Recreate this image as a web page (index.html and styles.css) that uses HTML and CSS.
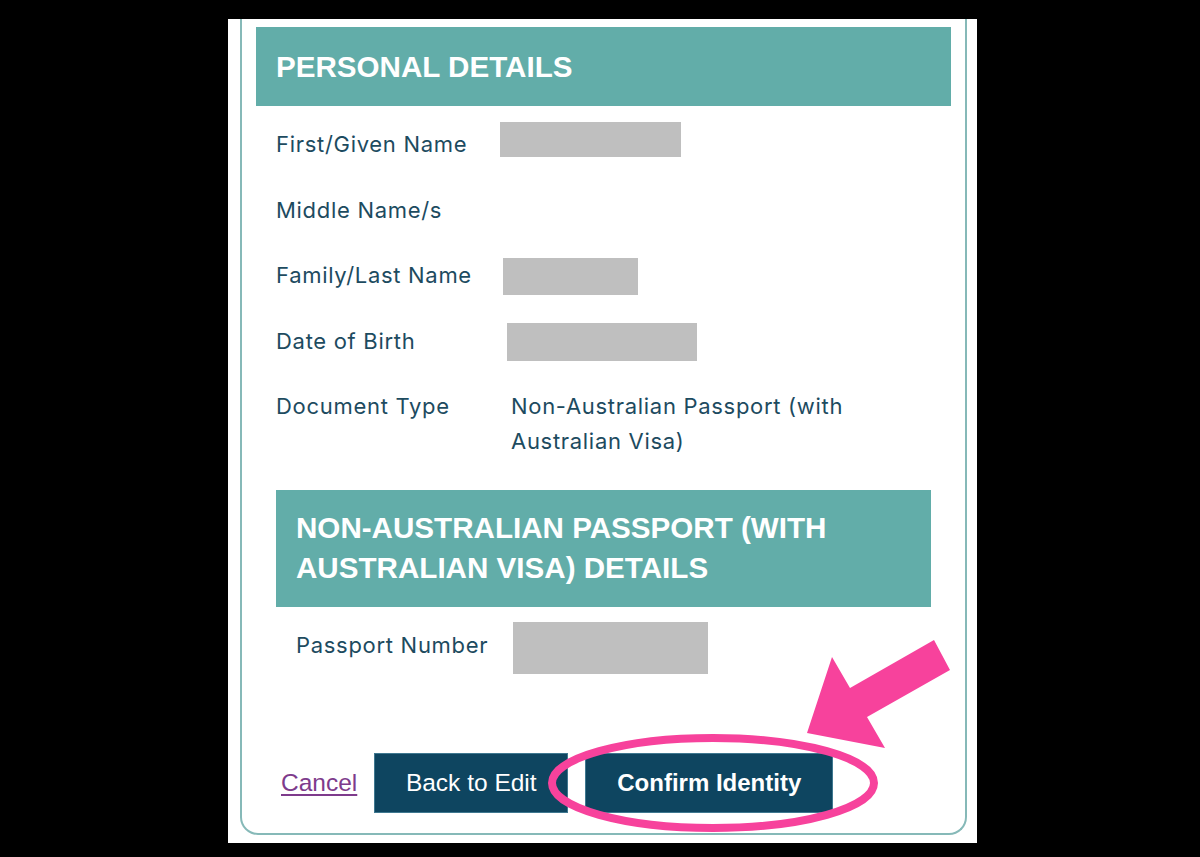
FILE: index.html
```html
<!DOCTYPE html>
<html lang="en">

<head>
    <meta charset="UTF-8">
    <meta name="viewport" content="width=device-width, initial-scale=1.0">
    <title>Confirm Identity</title>
    <link rel="stylesheet" href="styles.css">
</head>

<body>
    <div class="page">
        <div class="card">
            <h2 class="section-head">PERSONAL DETAILS</h2>
            <ul class="details">
                <li class="row">
                    <span class="label">First/Given Name</span>
                    <span class="redact redact-first"></span>
                </li>
                <li class="row">
                    <span class="label">Middle Name/s</span>
                </li>
                <li class="row">
                    <span class="label">Family/Last Name</span>
                    <span class="redact redact-last"></span>
                </li>
                <li class="row">
                    <span class="label">Date of Birth</span>
                    <span class="redact redact-dob"></span>
                </li>
                <li class="row row-multi">
                    <span class="label">Document Type</span>
                    <span class="value">Non-Australian Passport (with<br>Australian Visa)</span>
                </li>
            </ul>

            <div class="sub-section">
                <h2 class="section-head sub-head">NON-AUSTRALIAN PASSPORT (WITH AUSTRALIAN VISA) DETAILS</h2>
                <ul class="details">
                    <li class="row">
                        <span class="label">Passport Number</span>
                        <span class="redact redact-passport"></span>
                    </li>
                </ul>
            </div>

            <div class="actions">
                <a href="#" class="cancel">Cancel</a>
                <button class="btn">Back to Edit</button>
                <button class="btn btn-primary">Confirm Identity</button>
            </div>
        </div>
    </div>

    <!-- annotation drawn over the screenshot -->
    <svg class="annotation" width="1200" height="857" viewBox="0 0 1200 857">
        <ellipse cx="713" cy="783" rx="161" ry="45" fill="none" stroke="#f7429c" stroke-width="8" />
        <polygon points="807,733 832,657 850,688 934,640 950,670 867,717 885,748" fill="#f7429c" />
    </svg>
</body>

</html>
```

FILE: styles.css
```css
body {
    margin: 0;
    background-color: #000;
    font-family: "Liberation Sans", Arial, sans-serif;
}

.page {
    width: 749px;
    height: 824px;
    margin: 19px 0 0 228px;
    background-color: #fff;
    padding-left: 12px;
    box-sizing: border-box;
}

.card {
    width: 727px;
    height: 816px;
    box-sizing: border-box;
    border: 2px solid #86b9b8;
    border-top: none;
    border-radius: 0 0 18px 18px;
    padding: 8px 14px 0 14px;
}

.section-head {
    margin: 0;
    background-color: #62ada9;
    color: #fff;
    font-size: 29.6px;
    font-weight: bold;
    height: 79px;
    line-height: 79px;
    padding-left: 20px;
}

.details {
    list-style: none;
    margin: 0;
    padding: 0;
}

.card > .details {
    margin-top: 6px;
}

.row {
    display: flex;
    align-items: center;
    height: 65.5px;
    padding-left: 20px;
    font-family: Inter, "Noto Sans", sans-serif;
    font-size: 22px;
    line-height: 35px;
    color: #1d4b5f;
    letter-spacing: 0.7px;
}

.row-multi {
    height: auto;
    align-items: flex-start;
    padding: 15px 0 15px 20px;
}

.label {
    width: 235px;
    flex-shrink: 0;
}

.redact {
    display: block;
    background-color: #bfbfbf;
}

.redact-first {
    width: 181px;
    height: 35px;
    margin: -11px 0 0 -11px;
}

.redact-last {
    width: 135px;
    height: 37px;
    margin: 2px 0 0 -8px;
}

.redact-dob {
    width: 190px;
    height: 38px;
    margin: 2px 0 0 -4px;
}

.sub-section {
    padding: 0 20px;
    margin-top: 16px;
}

.sub-head {
    height: auto;
    line-height: 40px;
    padding: 18px 20px 19px 20px;
}

.sub-section .details {
    margin-top: 6px;
}

.redact-passport {
    width: 195px;
    height: 52px;
    margin: 4px 0 0 -18px;
}

.actions {
    display: flex;
    align-items: center;
    margin-top: 74px;
    padding-left: 25px;
    gap: 17px;
}

.cancel {
    color: #7e3b8c;
    font-size: 24.5px;
    text-decoration: underline;
    text-underline-offset: 3px;
}

.btn {
    height: 60px;
    width: 194px;
    flex-shrink: 0;
    background-color: #0e4560;
    color: #fff;
    border: 1px solid #3f7890;
    font-family: "Liberation Sans", Arial, sans-serif;
    font-size: 24.5px;
    cursor: pointer;
}

.btn-primary {
    width: 248px;
    font-size: 24px;
    font-weight: bold;
}

.annotation {
    position: absolute;
    left: 0;
    top: 0;
    pointer-events: none;
}
```
